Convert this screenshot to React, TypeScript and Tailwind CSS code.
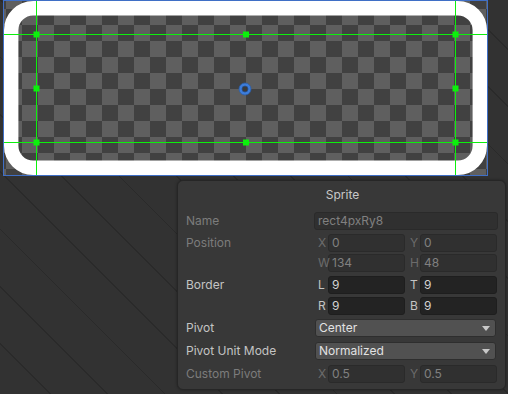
import React from "react";

const LINE_Y = [33.5, 141.5];
const LINE_X = [32.5, 451.5];

function SpriteView() {
  const w = 483;
  const h = 174;
  const midX = (LINE_X[0] + LINE_X[1]) / 2;
  const midY = (LINE_Y[0] + LINE_Y[1]) / 2;
  const handles = [
    [LINE_X[0], LINE_Y[0]],
    [midX, LINE_Y[0]],
    [LINE_X[1], LINE_Y[0]],
    [LINE_X[0], midY],
    [LINE_X[1], midY],
    [LINE_X[0], LINE_Y[1]],
    [midX, LINE_Y[1]],
    [LINE_X[1], LINE_Y[1]],
  ];

  return (
    <svg width={w} height={h} className="block">
      <defs>
        <pattern id="chk" x={18} y={8} width={32} height={32} patternUnits="userSpaceOnUse">
          <rect width={32} height={32} fill="#414141" />
          <rect width={16} height={16} fill="#5f5f5f" />
          <rect x={16} y={16} width={16} height={16} fill="#5f5f5f" />
        </pattern>
      </defs>
      <rect width={w} height={h} fill="url(#chk)" />
      {/* the sprite: 4px rounded outline */}
      <rect x={7.2} y={7.2} width={w - 14.4} height={h - 14.4} rx={22} fill="none" stroke="#ffffff" strokeWidth={14.4} />

      {/* border guides */}
      {LINE_Y.map((y) => (
        <line key={"h" + y} x1={0} x2={w} y1={y} y2={y} stroke="#0cf00c" strokeWidth={1} />
      ))}
      {LINE_X.map((x) => (
        <line key={"v" + x} x1={x} x2={x} y1={0} y2={h} stroke="#0cf00c" strokeWidth={1} />
      ))}
      {handles.map(([x, y], i) => (
        <rect key={i} x={x - 3} y={y - 3} width={6} height={6} fill="#0cf00c" />
      ))}

      {/* pivot */}
      <circle cx={241} cy={88} r={6} fill="#3d7ddb" />
      <circle cx={241} cy={88} r={6} fill="none" stroke="#2b5ea8" strokeWidth={0.8} />
      <circle cx={241} cy={88} r={3} fill="#3a3a3a" stroke="#24508f" strokeWidth={0.8} />
    </svg>
  );
}

function Field({ value, tone }: { value: string; tone: "on" | "off" }) {
  return (
    <div
      className={
        tone === "on"
          ? "flex h-[18px] flex-1 items-center rounded-[3px] border border-[#1e1e1e] bg-[#232323] px-[3px] text-[#d2d2d2]"
          : "flex h-[18px] flex-1 items-center rounded-[3px] border border-[#2a2a2a] bg-[#303030] px-[3px] text-[#808080]"
      }
    >
      {value}
    </div>
  );
}

function Pair({ items, tone }: { items: [string, string][]; tone: "on" | "off" }) {
  return (
    <div className="flex w-[184px]">
      {items.map(([axis, value]) => (
        <div key={axis} className="flex w-[92px] items-center pr-[1px]">
          <span className={"relative z-10 w-[14px] shrink-0 pl-[4px] " + (tone === "on" ? "text-[#c4c4c4]" : "text-[#6c6c6c]")}>{axis}</span>
          <Field value={value} tone={tone} />
        </div>
      ))}
    </div>
  );
}

function Dropdown({ value }: { value: string }) {
  return (
    <div className="ml-[1px] flex h-[18px] w-[181px] items-center justify-between rounded-[3px] border border-[#2e2e2e] bg-[#515151] pl-[3px] pr-[5px] text-[#e2e2e2]">
      <span>{value}</span>
      <svg width={8} height={5} viewBox="0 0 8 5">
        <polygon points="0,0 8,0 4,5" fill="#c8c8c8" />
      </svg>
    </div>
  );
}

function Label({ text, tone }: { text: string; tone: "on" | "off" }) {
  return (
    <div className={"w-[128px] self-start leading-[17px] " + (tone === "on" ? "text-[#c4c4c4]" : "text-[#7c7c7c]")}>
      {text}
    </div>
  );
}

export default function App() {
  return (
    <div className="h-[394px] w-[508px] overflow-hidden bg-[#323232] bg-[repeating-linear-gradient(45deg,transparent_0_35px,#2a2a2a_35px_36.2px,transparent_36.2px_40.52px)] text-[12px] [font-family:Inter,sans-serif]">
      <div className="pl-[3px]">
        <div className="h-[176px] w-[485px] border border-[#3f6fc6]">
          <SpriteView />
        </div>
      </div>

      <div className="ml-[177px] mt-[4px] flex h-[210px] w-[329px] flex-col rounded-[6px] border border-[#262626] bg-[#383838] pl-[8px] pr-[6px] shadow-[0_0_3px_rgba(0,0,0,0.35)]">
        <div className="flex h-[28px] items-center justify-center text-[#c8c8c8]">Sprite</div>

        <div className="mt-[3px] flex h-[18px]">
          <Label text="Name" tone="off" />
          <div className="flex w-[184px]">
            <Field value="rect4pxRy8" tone="off" />
          </div>
        </div>

        <div className="mt-[4px] flex">
          <Label text="Position" tone="off" />
          <div className="flex flex-col gap-[2px]">
            <Pair tone="off" items={[["X", "0"], ["Y", "0"]]} />
            <Pair tone="off" items={[["W", "134"], ["H", "48"]]} />
          </div>
        </div>

        <div className="mt-[4px] flex">
          <Label text="Border" tone="on" />
          <div className="flex flex-col gap-[3px]">
            <Pair tone="on" items={[["L", "9"], ["T", "9"]]} />
            <Pair tone="on" items={[["R", "9"], ["B", "9"]]} />
          </div>
        </div>

        <div className="mt-[4px] flex h-[18px] items-center">
          <div className="w-[128px] text-[#c4c4c4]">Pivot</div>
          <Dropdown value="Center" />
        </div>

        <div className="mt-[5px] flex h-[18px] items-center">
          <div className="w-[128px] text-[#c4c4c4]">Pivot Unit Mode</div>
          <Dropdown value="Normalized" />
        </div>

        <div className="mt-[5px] flex h-[18px]">
          <Label text="Custom Pivot" tone="off" />
          <Pair tone="off" items={[["X", "0.5"], ["Y", "0.5"]]} />
        </div>
      </div>
    </div>
  );
}
